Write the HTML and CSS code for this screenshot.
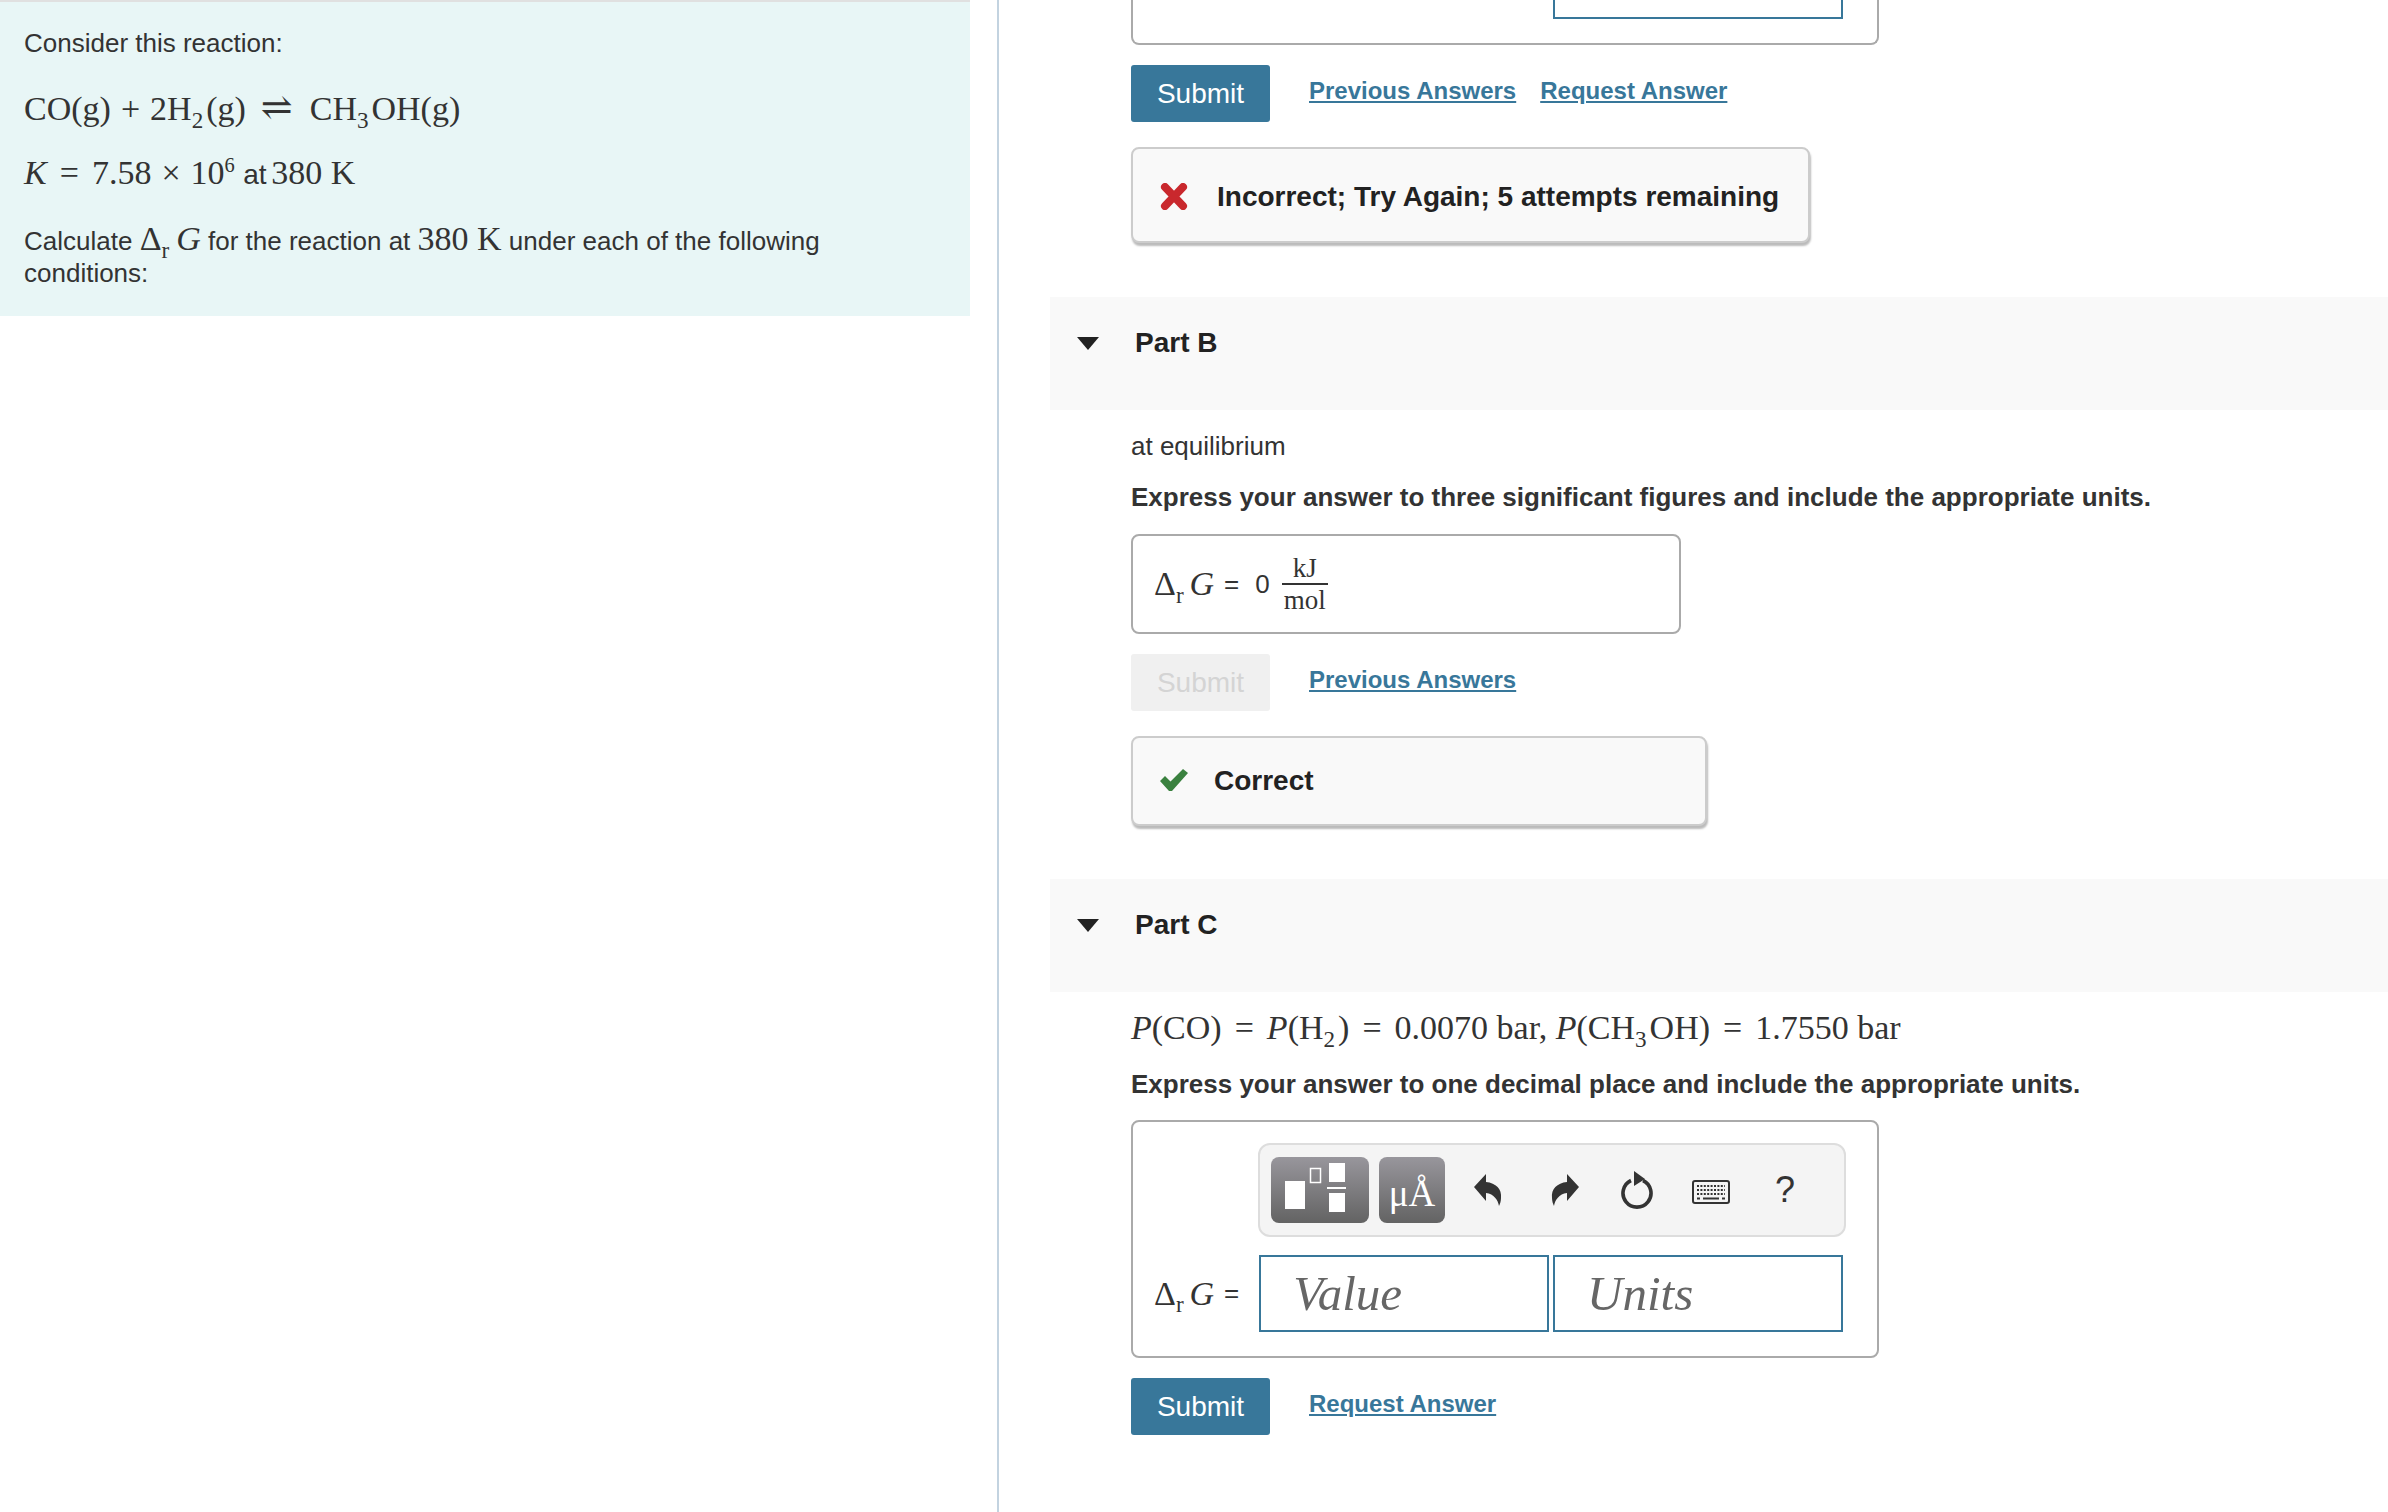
FILE: index.html
```html
<!DOCTYPE html>
<html lang="en">
<head>
  <meta charset="UTF-8">
  <title>Item</title>
  <link rel="stylesheet" href="styles.css">
</head>
<body>
  <div class="intro-col">
    <div class="intro">
      <p class="intro-first">Consider this reaction:</p>
      <p class="math eqn">CO(g)<span class="op">+</span>2H<sub>2</sub>(g)<span class="arrows">⇌</span>CH<sub>3</sub>OH(g)</p>
      <p class="math keq"><i>K</i><span class="op op-eq">=</span>7.58<span class="op">×</span>10<sup>6</sup> <span class="sans">at</span> 380 K</p>
      <p class="calc">Calculate <span class="math big">Δ<sub>r</sub><i>G</i></span> for the reaction at <span class="math big">380 K</span> under each of the following conditions:</p>
    </div>
  </div>

  <div class="main">
    <div class="content">
      <!-- end of part A, cut off by the scroll -->
      <div class="answer-cut">
        <div class="input-cut"></div>
      </div>
      <div class="actions a-first">
        <button class="submit">Submit</button>
        <a class="link" href="#">Previous Answers</a>
        <a class="link" href="#">Request Answer</a>
      </div>
      <div class="feedback fb-wrong">
        <svg class="fb-x" viewBox="0 0 28 27"><path d="M5 4 L23 23 M23 4 L5 23" fill="none" stroke="#c9282d" stroke-width="8" stroke-linecap="round"/></svg>
        <span>Incorrect; Try Again; 5 attempts remaining</span>
      </div>
    </div>

    <div class="part-head ph-b"><span class="tri"></span><span class="part-name">Part B</span></div>
    <div class="content">
      <p class="question q-b">at equilibrium</p>
      <p class="express">Express your answer to three significant figures and include the appropriate units.</p>
      <div class="answer-done">
        <span class="math lhs">Δ<sub>r</sub><i>G</i></span><span class="eq">=</span><span class="val">0</span>
        <span class="math frac"><span class="num">kJ</span><span class="den">mol</span></span>
      </div>
      <div class="actions a-second">
        <button class="submit off" disabled>Submit</button>
        <a class="link" href="#">Previous Answers</a>
      </div>
      <div class="feedback fb-right">
        <svg class="fb-check" viewBox="0 0 28 22"><path d="M0 12 L5 7 L10.5 12.5 L23 0 L28 4 L12 22 L9 22 Z"/></svg>
        <span>Correct</span>
      </div>
    </div>

    <div class="part-head ph-c"><span class="tri"></span><span class="part-name">Part C</span></div>
    <div class="content">
      <p class="math question q-c"><i>P</i>(CO)<span class="op">=</span><i>P</i>(H<sub>2</sub>)<span class="op">=</span>0.0070 bar, <i>P</i>(CH<sub>3</sub>OH)<span class="op">=</span>1.7550 bar</p>
      <p class="express ex-c">Express your answer to one decimal place and include the appropriate units.</p>
      <div class="answer-open">
        <div class="toolbar">
          <div class="tool-btn tb-template">
            <svg viewBox="0 0 98 66" width="98" height="66">
              <rect x="14" y="24" width="20" height="28" fill="#fff"/>
              <rect x="39.5" y="11.5" width="10" height="14" fill="none" stroke="#fff" stroke-width="1.5"/>
              <rect x="58" y="6" width="16" height="19" fill="#fff"/>
              <rect x="56" y="30" width="19" height="2" fill="#fff"/>
              <rect x="58" y="36" width="16" height="19" fill="#fff"/>
            </svg>
          </div>
          <div class="tool-btn tb-units"><span>μÅ</span></div>
          <svg class="tool-ic ic-undo" viewBox="0 0 28 32"><path d="M12 0 L12 8 C22 9 28 15 27 24 C27 27 26 30 25 32 C24 26 20 20 12 19 L12 27 L0 13 Z"/></svg>
          <svg class="tool-ic ic-redo" viewBox="0 0 28 32"><path d="M16 0 L16 8 C6 9 0 15 1 24 C1 27 2 30 3 32 C4 26 8 20 16 19 L16 27 L28 13 Z"/></svg>
          <svg class="tool-ic ic-reset" viewBox="0 0 34 38"><path d="M11 9.5 A14 14 0 1 0 23 9.5" fill="none" stroke="#333" stroke-width="3.6"/><path d="M14 0 L25 8 L14 15 Z" fill="#333"/></svg>
          <svg class="tool-ic ic-keys" viewBox="0 0 38 24">
            <rect x="1" y="1" width="36" height="22" rx="2" fill="none" stroke="#333" stroke-width="2"/>
            <path d="M5 6 H33 M5 10 H33 M5 14 H33" stroke="#333" stroke-width="2" stroke-dasharray="2 1.4"/>
            <path d="M5 18.5 H8 M11 18.5 H27 M30 18.5 H33" stroke="#333" stroke-width="2"/>
          </svg>
          <span class="tool-help">?</span>
        </div>
        <div class="answer-row">
          <span class="math lhs">Δ<sub>r</sub><i>G</i></span><span class="eq">=</span>
          <div class="field"><span>Value</span></div>
          <div class="field"><span>Units</span></div>
        </div>
      </div>
      <div class="actions a-third">
        <button class="submit">Submit</button>
        <a class="link" href="#">Request Answer</a>
      </div>
    </div>
  </div>
</body>
</html>
```

FILE: styles.css
```css
body {
  margin: 0;
  width: 2388px;
  height: 1512px;
  overflow: hidden;
  display: flex;
  font-family: "Liberation Sans", Arial, sans-serif;
  font-size: 26px;
  color: #333;
  background: #fff;
}

p {
  margin: 0;
}

.math {
  font-family: "Liberation Serif", "DejaVu Serif", serif;
}

.sans {
  font-family: "Liberation Sans", Arial, sans-serif;
}

sub, sup {
  font-size: 0.68em;
  line-height: 0;
}

sup {
  font-size: 0.6em;
}

.math sub {
  padding-right: 3px;
}

.op {
  margin: 0 10px;
}

/* LEFT COLUMN */
.intro-col {
  width: 997px;
  flex: 0 0 997px;
  border-right: 2px solid #c3d3e0;
}

.intro {
  width: 970px;
  height: 316px;
  box-sizing: border-box;
  background: #e8f6f6;
  border-top: 2px solid #e0e0e0;
  padding: 25px 24px 0;
  line-height: 32px;
}

.eqn {
  margin-top: 32px;
  font-size: 34px;
}

.arrows {
  font-size: 38px;
  margin: 0 17px 0 15px;
}

.keq {
  margin-top: 32px;
  font-size: 34px;
}

.keq .op-eq {
  margin: 0 13px;
}

.keq .sans {
  font-size: 28px;
  margin-right: -4px;
}

.calc {
  margin-top: 32px;
  width: 860px;
}

.calc .math sub {
  padding-right: 7px;
}

.big {
  font-size: 34px;
}

/* RIGHT COLUMN */
.main {
  flex: 1;
  padding-left: 51px;
  min-width: 0;
}

.content {
  padding-left: 81px;
}

.answer-cut {
  width: 748px;
  height: 45px;
  box-sizing: border-box;
  border: 2px solid #aaa;
  border-top: 0;
  border-radius: 0 0 8px 8px;
}

.input-cut {
  width: 290px;
  height: 19px;
  margin-left: 420px;
  box-sizing: border-box;
  border: 2px solid #38779a;
  border-top: 0;
}

.actions {
  display: flex;
  align-items: flex-start;
  gap: 24px;
}

.a-first { margin-top: 20px; }
.a-second { margin-top: 20px; }
.a-third { margin-top: 20px; }

.submit {
  width: 139px;
  height: 57px;
  margin-right: 15px;
  border: 0;
  border-radius: 3px;
  background: #38779a;
  color: #fff;
  font-family: inherit;
  font-size: 28px;
  padding: 0;
}

.submit.off {
  background: #f0f0f0;
  color: #d4d4d4;
}

.link {
  font-size: 24px;
  font-weight: bold;
  color: #38779a;
  line-height: 52px;
}

.feedback {
  display: flex;
  align-items: center;
  box-sizing: border-box;
  background: #f9f9f9;
  border: 2px solid #ccc;
  border-radius: 8px;
  box-shadow: 1px 3px 2px #bbb;
  font-size: 28px;
  font-weight: bold;
  color: #222;
}

.fb-wrong {
  width: 679px;
  height: 96px;
  margin-top: 25px;
  padding: 3px 0 0 27px;
}

.fb-x {
  width: 28px;
  height: 27px;
  margin-right: 29px;
}

.fb-right {
  width: 576px;
  height: 90px;
  margin-top: 25px;
  padding-left: 27px;
}

.fb-check {
  width: 28px;
  height: 22px;
  margin: 0 26px 2px 0;
  fill: #3a813f;
}

.part-head {
  display: flex;
  align-items: flex-start;
  background: #f9f9f9;
  height: 113px;
  padding: 28px 0 0 27px;
  box-sizing: border-box;
  font-size: 28px;
  font-weight: bold;
  color: #222;
  line-height: 36px;
}

.ph-b { margin-top: 54px; }
.ph-c { margin-top: 53px; }

.tri {
  width: 0;
  height: 0;
  margin: 12px 36px 0 0;
  border-left: 11.5px solid transparent;
  border-right: 11.5px solid transparent;
  border-top: 13px solid #222;
}

.question {
  line-height: 32px;
}

.q-b { margin-top: 20px; }
.q-c { margin-top: 18px; font-size: 34px; line-height: 36px; }

.q-c .op {
  margin: 0 13px;
}

.express {
  margin-top: 19px;
  font-weight: bold;
  line-height: 32px;
}

.ex-c {
  margin-top: 22px;
}

.answer-done {
  width: 550px;
  height: 100px;
  margin-top: 21px;
  box-sizing: border-box;
  display: flex;
  align-items: center;
  padding-left: 21px;
  border: 2px solid #aaa;
  border-radius: 8px;
}

.lhs {
  width: 64px;
  flex: none;
  font-size: 34px;
  white-space: nowrap;
}

.lhs sub {
  padding-right: 6px;
}

.eq {
  margin: 0 16px 0 6px;
  font-size: 26px;
}

.val {
  font-size: 26px;
  margin-right: 12px;
}

.frac {
  display: flex;
  flex-direction: column;
  align-items: center;
  font-size: 27px;
  line-height: 30px;
}

.num {
  display: block;
  width: 100%;
  text-align: center;
  border-bottom: 2px solid #333;
}

.den {
  padding: 0 2px;
}

.answer-open {
  width: 748px;
  height: 238px;
  margin-top: 20px;
  box-sizing: border-box;
  border: 2px solid #aaa;
  border-radius: 8px;
  padding: 21px 30px 0 125px;
}

.toolbar {
  width: 588px;
  height: 94px;
  box-sizing: border-box;
  display: flex;
  align-items: center;
  padding-left: 11px;
  background: #f4f4f4;
  border: 2px solid #ddd;
  border-radius: 12px;
}

.tool-btn {
  height: 66px;
  border-radius: 8px;
  background: linear-gradient(#98969c, #636363);
  color: #fff;
  display: flex;
  align-items: center;
  justify-content: center;
}

.tb-template {
  width: 98px;
}

.tb-units {
  width: 66px;
  margin-left: 10px;
  font-family: "Liberation Serif", serif;
  font-size: 37px;
  padding-top: 6px;
  box-sizing: border-box;
}

.tool-ic {
  fill: #333;
  flex: none;
}

.ic-undo { width: 28px; height: 32px; margin-left: 29px; }
.ic-redo { width: 28px; height: 32px; margin-left: 49px; }
.ic-reset { width: 34px; height: 38px; margin-left: 41px; }
.ic-keys { width: 38px; height: 24px; margin-left: 38px; margin-top: 4px; }

.tool-help {
  margin-left: 45px;
  font-size: 36px;
  color: #333;
}

.answer-row {
  display: flex;
  align-items: center;
  margin: 18px 0 0 -104px;
}

.answer-row .eq {
  margin: 0 20px 0 6px;
}

.field {
  width: 290px;
  height: 77px;
  box-sizing: border-box;
  border: 2px solid #38779a;
  margin-right: 4px;
  padding-left: 32px;
  font-family: "Liberation Serif", serif;
  font-style: italic;
  font-size: 49px;
  color: #666;
  line-height: 74px;
}
```
